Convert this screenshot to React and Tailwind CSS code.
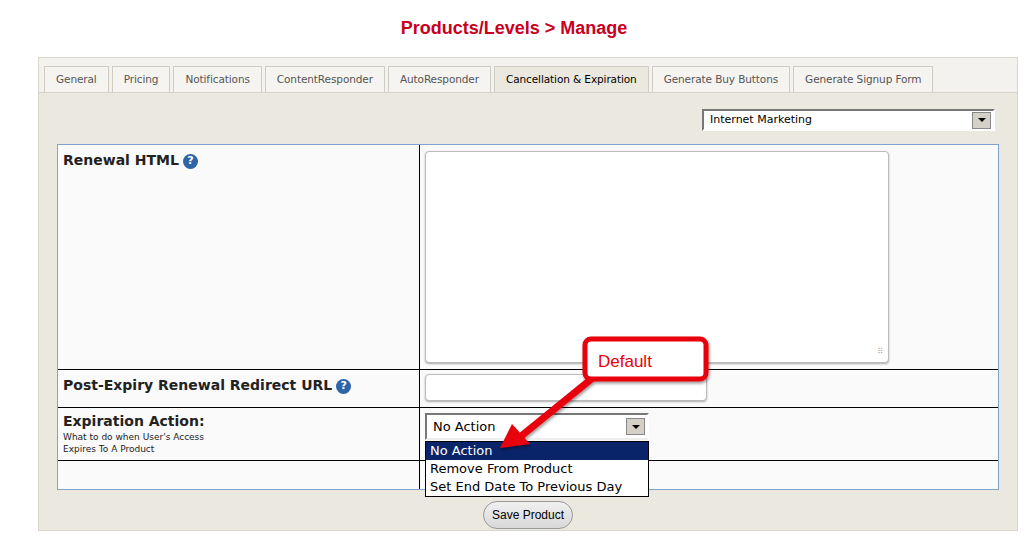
export default function App() {
  const tabs = ["General","Pricing","Notifications","ContentResponder","AutoResponder","Cancellation & Expiration","Generate Buy Buttons","Generate Signup Form"];
  const Q = () => (
    <span className="inline-flex items-center justify-center w-[15px] h-[15px] rounded-full bg-[#2f64a8] text-white text-[11px] font-bold ml-1 align-middle">?</span>
  );
  const Arrow = () => (
    <span className="w-[19px] h-[17px] border border-[#888] bg-[#d4d0c8] flex items-center justify-center">
      <span className="w-0 h-0 border-l-[4px] border-r-[4px] border-t-[4px] border-l-transparent border-r-transparent border-t-black" />
    </span>
  );
  return (
    <div className="relative w-[1028px] h-[543px] bg-white" style={{fontFamily:'"DejaVu Sans", sans-serif'}}>
      <div className="h-[57px] flex items-center justify-center text-[#c8001e] font-bold text-[18px]" style={{fontFamily:'"Liberation Sans", Arial, sans-serif'}}>Products/Levels &gt; Manage</div>
      <div className="ml-[38px] w-[980px] h-[474px] bg-[#ebe8df] border border-[#d8d5cc] flex flex-col">
        <div className="flex gap-[3px] px-[5px] pt-[8px] bg-[#f4f2ee] border-b border-[#d6d3ca]">
          {tabs.map((t,i)=>(
            <div key={t} className={`h-[26px] px-[11px] flex items-center text-[10.5px] tracking-[-0.1px] border border-b-0 border-[#cfccc3] ${i===5?'bg-[#ebe8df] text-black -mb-px':'bg-[#f5f4f1] text-[#555]'}`}>{t}</div>
          ))}
        </div>
        <div className="flex justify-end pr-[22px] pt-[16px]">
          <div className="w-[293px] h-[22px] border-2 border-t-[#777] border-l-[#777] border-r-white border-b-white bg-white flex items-center justify-between pl-[6px] pr-[2px] text-[11px]">Internet Marketing<Arrow/></div>
        </div>
        <div className="mx-[18px] mt-[13px] w-[942px] bg-[#fafafa] border border-[#7fa4cf] text-[14px]">
          <div className="flex h-[225px] border-b border-black">
            <div className="w-[362px] border-r border-black p-[5px] font-bold text-[#222]">Renewal HTML<Q/></div>
            <div className="pl-[5px] pt-[6px]"><div className="relative w-[464px] h-[212px] bg-white border border-[#bbb] rounded-[4px] shadow-[0_1px_2px_#aaa]"><span className="absolute right-[5px] bottom-[4px] text-[8px] text-[#aaa]">⠿</span></div></div>
          </div>
          <div className="flex h-[38px] border-b border-black">
            <div className="w-[362px] border-r border-black p-[5px] font-bold text-[#222]">Post-Expiry Renewal Redirect URL<Q/></div>
            <div className="pl-[5px] pt-[4px]"><div className="w-[282px] h-[27px] bg-white border border-[#bbb] rounded-[4px] shadow-[0_1px_2px_#aaa]"/></div>
          </div>
          <div className="flex h-[53px] border-b border-black">
            <div className="w-[362px] border-r border-black px-[5px] pt-[6px] text-[#222] leading-none">
              <div className="font-bold text-[14px]">Expiration Action:</div>
              <div className="text-[9px] mt-[3px] leading-[12px]">What to do when User's Access<br/>Expires To A Product</div>
            </div>
            <div className="pl-[5px] pt-[5px] relative">
              <div className="w-[224px] h-[27px] border-2 border-t-[#777] border-l-[#777] border-r-white border-b-[#eee] bg-white flex items-center justify-between pl-[6px] pr-[2px] text-[13px]">No Action<Arrow/></div>
              <div className="absolute left-[5px] top-[33px] w-[224px] border border-black bg-white text-[13px] leading-[18px] z-10">
                <div className="bg-[#0a246a] text-white px-[4px]">No Action</div>
                <div className="px-[4px]">Remove From Product</div>
                <div className="px-[4px]">Set End Date To Previous Day</div>
              </div>
            </div>
          </div>
          <div className="flex h-[28px]"><div className="w-[362px] border-r border-black"/></div>
        </div>
        <div className="flex justify-center mt-[11px]">
          <div className="h-[28px] px-[8px] rounded-full border border-[#999] bg-gradient-to-b from-[#f0f0f0] to-[#d8d8d8] flex items-center text-[12px]" style={{fontFamily:'"Liberation Sans", Arial, sans-serif'}}>Save Product</div>
        </div>
      </div>
      <svg className="absolute left-0 top-0 pointer-events-none z-20" width="1028" height="543">
        <defs><filter id="s"><feDropShadow dx="1" dy="2" stdDeviation="1.5" floodOpacity="0.4"/></filter></defs>
        <g filter="url(#s)">
          <line x1="600" y1="372" x2="520" y2="437" stroke="#e8000b" strokeWidth="7" />
          <polygon points="500,448 512,424 530,444" fill="#e8000b"/>
          <rect x="585" y="339" width="121" height="40" rx="6" fill="white" stroke="#e8000b" strokeWidth="5"/>
        </g>
      </svg>
      <div className="absolute left-[598px] top-[349px] z-30 text-[#e8000b] text-[17px]" style={{fontFamily:'"Liberation Sans", Arial, sans-serif'}}>Default</div>
    </div>
  );
}
